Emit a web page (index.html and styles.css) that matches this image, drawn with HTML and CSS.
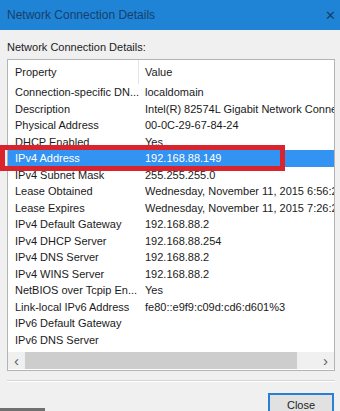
FILE: index.html
```html
<!DOCTYPE html>
<html lang="en">
<head>
    <meta charset="UTF-8">
    <title>Network Connection Details</title>
    <link rel="stylesheet" href="styles.css">
</head>
<body>

<div class="window">
    <div class="titlebar">
        <span class="title">Network Connection Details</span>
        <span class="close-x">&#x2715;</span>
    </div>

    <div class="content">
        <div class="label">Network Connection Details:</div>

        <div class="listbox">
            <div class="row header">
                <div class="cell prop">Property</div>
                <div class="cell val">Value</div>
            </div>
            <div class="rows">
                <div class="row"><div class="cell prop">Connection-specific DN...</div><div class="cell val">localdomain</div></div>
                <div class="row"><div class="cell prop">Description</div><div class="cell val">Intel(R) 82574L Gigabit Network Connection</div></div>
                <div class="row"><div class="cell prop">Physical Address</div><div class="cell val">00-0C-29-67-84-24</div></div>
                <div class="row"><div class="cell prop">DHCP Enabled</div><div class="cell val">Yes</div></div>
                <div class="row selected"><div class="cell prop">IPv4 Address</div><div class="cell val">192.168.88.149</div></div>
                <div class="row"><div class="cell prop">IPv4 Subnet Mask</div><div class="cell val">255.255.255.0</div></div>
                <div class="row"><div class="cell prop">Lease Obtained</div><div class="cell val">Wednesday, November 11, 2015 6:56:25 PM</div></div>
                <div class="row"><div class="cell prop">Lease Expires</div><div class="cell val">Wednesday, November 11, 2015 7:26:24 PM</div></div>
                <div class="row"><div class="cell prop">IPv4 Default Gateway</div><div class="cell val">192.168.88.2</div></div>
                <div class="row"><div class="cell prop">IPv4 DHCP Server</div><div class="cell val">192.168.88.254</div></div>
                <div class="row"><div class="cell prop">IPv4 DNS Server</div><div class="cell val">192.168.88.2</div></div>
                <div class="row"><div class="cell prop">IPv4 WINS Server</div><div class="cell val">192.168.88.2</div></div>
                <div class="row"><div class="cell prop">NetBIOS over Tcpip En...</div><div class="cell val">Yes</div></div>
                <div class="row"><div class="cell prop">Link-local IPv6 Address</div><div class="cell val">fe80::e9f9:c09d:cd6:d601%3</div></div>
                <div class="row"><div class="cell prop">IPv6 Default Gateway</div><div class="cell val"></div></div>
                <div class="row"><div class="cell prop">IPv6 DNS Server</div><div class="cell val"></div></div>
            </div>
            <div class="hscroll">
                <span class="arrow">&#x2039;</span>
                <div class="track"><div class="thumb"></div></div>
                <span class="arrow">&#x203A;</span>
            </div>
        </div>

        <div class="separator"></div>

        <div class="buttons">
            <button class="btn">Close</button>
        </div>
    </div>

    <!-- red highlight drawn over the list -->
    <div class="marker"></div>
    <div class="taskbar"></div>
</div>

</body>
</html>
```

FILE: styles.css
```css
body {
    margin: 0;
    width: 340px;
    height: 411px;
    overflow: hidden;
    background: #f0f0f0;
    font-family: "Liberation Sans", Arial, sans-serif;
    font-size: 11px;
    color: #1a1a1a;
}

.window {
    position: relative;
    width: 340px;
    height: 411px;
}

.titlebar {
    height: 30px;
    background: #1f84d6;
    display: flex;
    align-items: center;
    justify-content: space-between;
    padding: 0 4px 0 7px;
    box-sizing: border-box;
}

.titlebar .title {
    font-size: 12px;
    color: #17406b;
}

.titlebar .close-x {
    font-size: 13px;
    color: #17406b;
}

.content {
    padding: 0 5px 0 7px;
}

.label {
    height: 29px;
    line-height: 34px;
    color: #222;
}

.listbox {
    background: #fff;
    border: 1px solid #b4b4b4;
    width: 328px;
    box-sizing: border-box;
}

.row {
    display: flex;
    height: 16.5px;
    line-height: 16.5px;
    white-space: nowrap;
}

.row.header {
    height: 24px;
    line-height: 24px;
}

.rows {
    height: 268px;
}

.cell {
    overflow: hidden;
}

.cell.prop {
    flex: none;
    width: 131px;
    padding-left: 7px;
    box-sizing: border-box;
}

.cell.val {
    flex: 1;
    min-width: 0;
    padding-left: 6px;
}

.header .cell.prop {
    border-right: 1px solid #e5e5e5;
}

.row.selected {
    background: #3393f3;
    color: #fff;
}

.hscroll {
    height: 17px;
    display: flex;
    align-items: center;
    background: #f0f0f0;
    margin-bottom: 1px;
}

.hscroll .arrow {
    flex: none;
    width: 17px;
    text-align: center;
    font-size: 15px;
    color: #606060;
    line-height: 17px;
}

.hscroll .track {
    flex: 1;
    height: 17px;
}

.hscroll .thumb {
    width: 272px;
    height: 17px;
    background: #cdcdcd;
}

.separator {
    margin: 9px 0 0;
    border-top: 1px solid #d5d5d5;
    border-bottom: 1px solid #fff;
}

.buttons {
    display: flex;
    justify-content: flex-end;
    padding-top: 11px;
}

.btn {
    width: 66px;
    height: 24px;
    background: #e1e1e1;
    border: 2px solid #2a7fd4;
    font-family: "Liberation Sans", Arial, sans-serif;
    font-size: 11px;
    color: #222;
    padding: 0;
    margin-right: 1px;
}

.marker {
    position: absolute;
    left: 0;
    top: 145px;
    width: 285px;
    height: 26px;
    border: 5px solid #d9232d;
    box-sizing: border-box;
}

.taskbar {
    position: absolute;
    left: 0;
    bottom: 0;
    width: 45px;
    height: 3px;
    background: #707070;
}
```
